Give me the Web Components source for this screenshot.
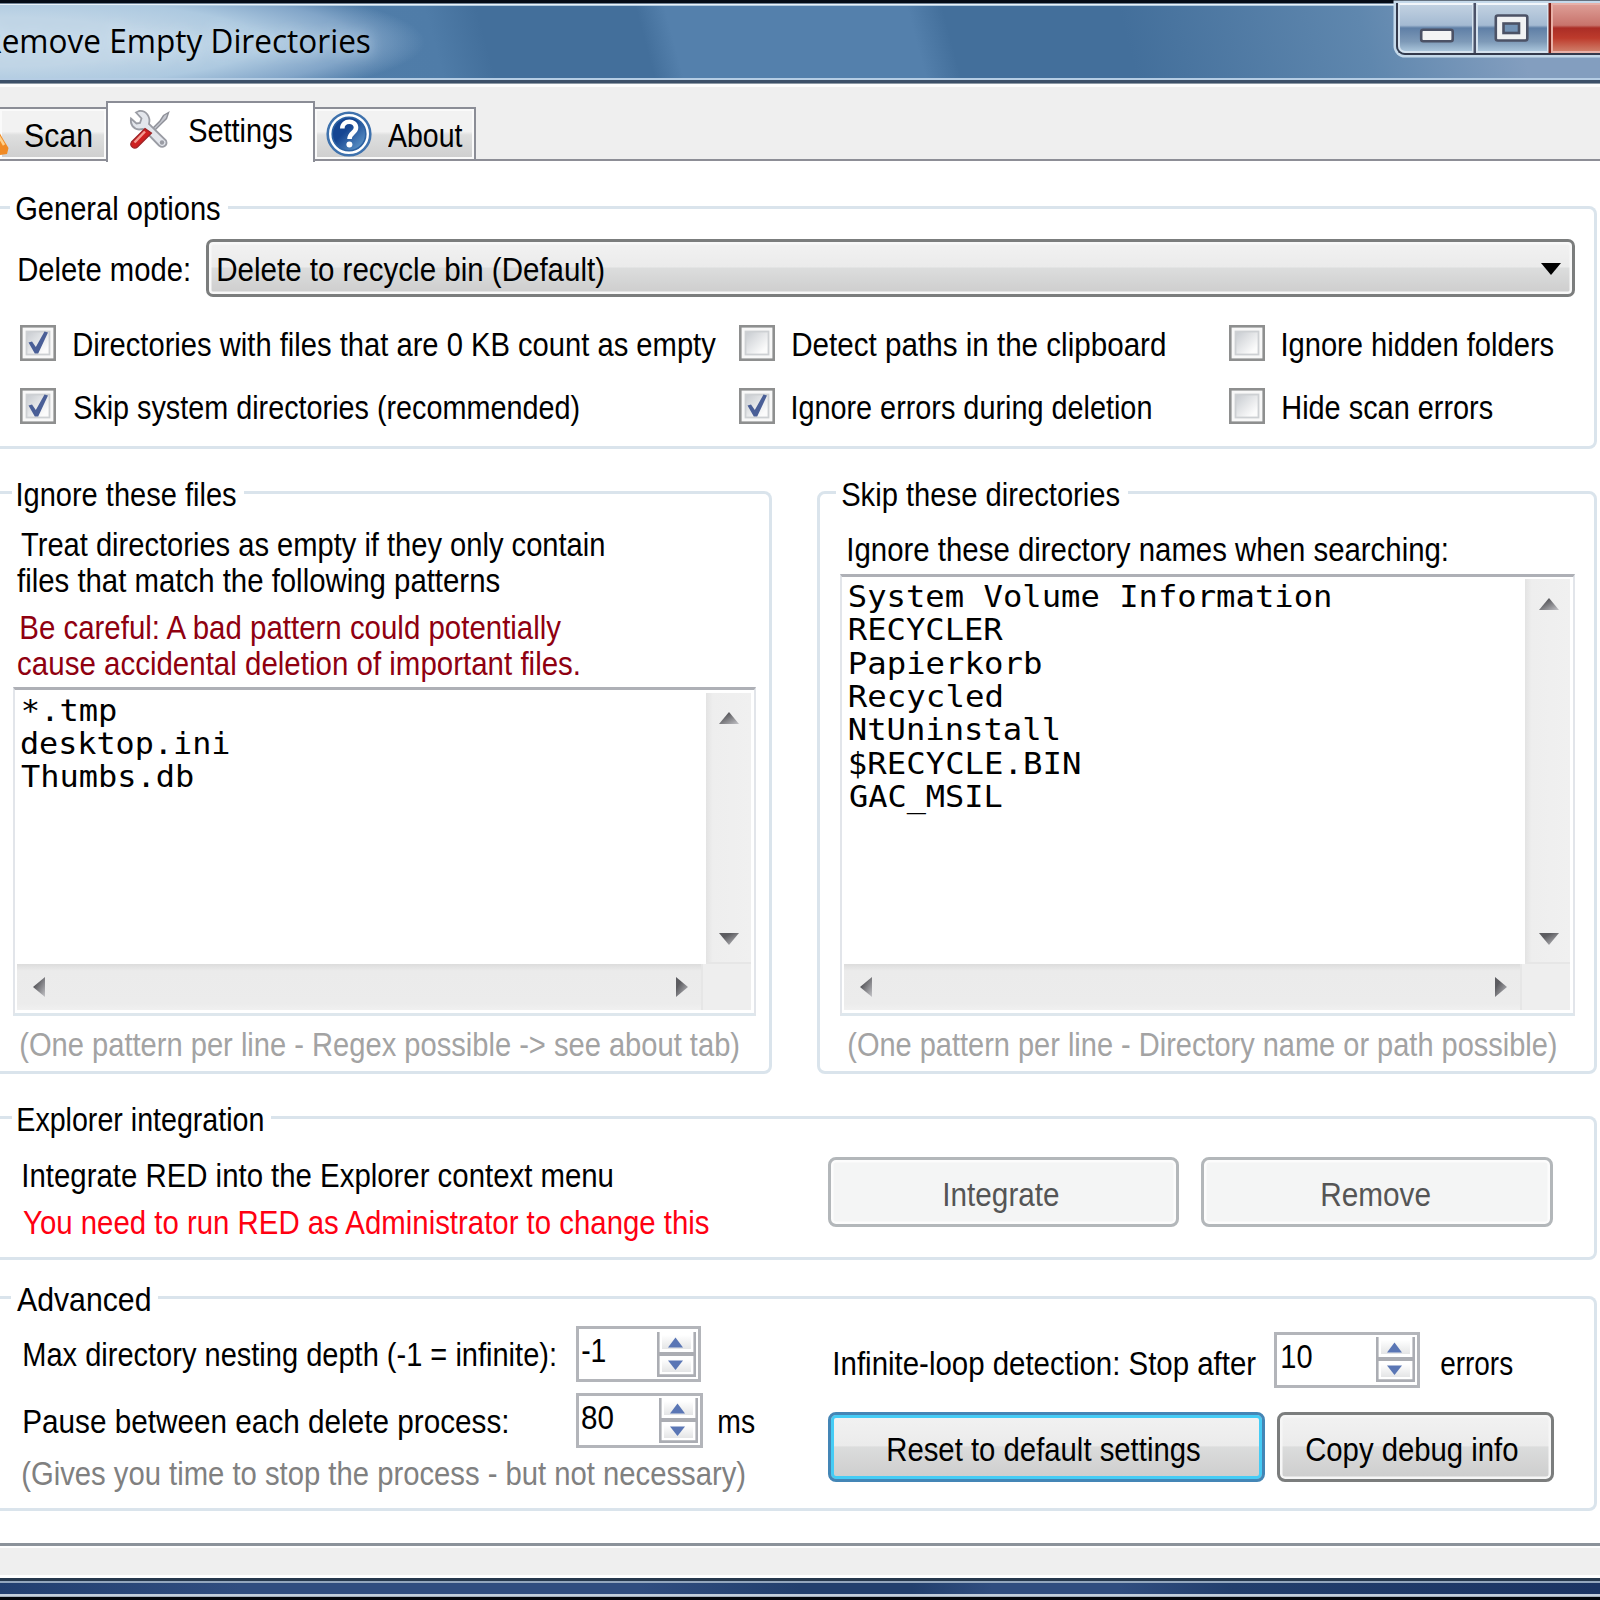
<!DOCTYPE html>
<html lang="en">
<head>
<meta charset="utf-8">
<title>Remove Empty Directories</title>
<style>
  html, body { margin: 0; padding: 0; width: 1600px; height: 1600px; overflow: hidden; background: #fff; }
  body { font-family: "Liberation Sans", Arial, sans-serif; font-size: 33.5px; color: #000; }
</style>
</head>
<body>
<red-window></red-window>
<script>
const define = (name, html, setup) => {
  const tpl = document.createElement('template');
  tpl.innerHTML = html;
  customElements.define(name, class extends HTMLElement {
    connectedCallback() {
      if (this.shadowRoot) return;
      this.attachShadow({ mode: 'open' }).appendChild(tpl.content.cloneNode(true));
      if (setup) setup.call(this, this.shadowRoot);
    }
  });
};

/* Text run whose visible glyphs span exactly the width given in "w". */
const ctx = document.createElement('canvas').getContext('2d');
define('fit-text', `
  <style>
    :host { display: block; height: 36px; line-height: 36px; flex: none; }
    span { display: inline-block; white-space: pre; transform-origin: 0 0; }
  </style><span><slot></slot></span>`, function (root) {
  const w = parseFloat(this.getAttribute('w'));
  const cs = getComputedStyle(this);
  ctx.font = `${cs.fontSize} ${cs.fontFamily}`;
  const m = ctx.measureText(this.textContent);
  const s = w / (m.actualBoundingBoxLeft + m.actualBoundingBoxRight);
  this.style.width = w + 'px';
  root.querySelector('span').style.transform =
    `translate(${m.actualBoundingBoxLeft * s}px, var(--dy, 0px)) scaleX(${s})`;
});

define('title-bar', `
  <style>
    :host { display: flex; flex: none; height: 84px; box-sizing: border-box; justify-content: space-between; align-items: flex-start;
      padding-top: 3px; overflow: hidden;
      background:
        linear-gradient(#040b16 0 3px, #6f8296 3px 3.6px, #e9f2f9 3.6px 5.2px, #b3cde2 5.2px 6.4px, transparent 6.4px 78px, #b5cde4 78px 80.3px, #3c5068 80.5px 83px, #8d99a5 83px 84px),
        radial-gradient(ellipse 425px 70px at 0px 42px, #c0d5e6 0 35%, #adc9e0 62%, #8eafd0cc 84%, #6a93bd00 100%),
        linear-gradient(75deg, #5480ab 0, #4f7ca8 430px, #436f9b 480px, #436f9b 634px, #5480ac 662px, #5480ac 896px, #436f9b 930px, #436f9b 1100px, #5f87ae 1330px, #839ebf 1480px); }
    fit-text { font-family: "Open Sans", "Noto Sans", sans-serif; font-size: 33.5px; margin: 19px 0 0 -15px; text-shadow: 0 0 14px #dcebf6; }
    .controls { display: flex; flex: none; width: 202px; height: 50px; border: 2px solid #33394b; border-top: 0; border-right: 0;
      border-radius: 0 0 0 9px; box-shadow: 0 0 0 2.5px #c5d9ea; overflow: visible; }
    .b { box-sizing: border-box; flex: none; display: flex; justify-content: center; border: 2px solid #d5e2ee; border-top-color: #f2f6fa; height: 50px;
      background: linear-gradient(#c1d1e1 0, #a4bad2 44%, #5f7fa6 50%, #7e9ab8 80%, #a9c4da); }
    .min { width: 75.5px; border-radius: 0 0 0 7px; }
    .max { width: 72.5px; }
    .max, .close { box-shadow: -2.5px 0 #4b5268; margin-left: 2.5px; }
    .close { width: 60px; box-shadow: -2.5px 0 #7c2018; border-color: #e8b1a8; background: linear-gradient(#dd9d95, #c8736c 44%, #ab2d26 50%, #bd3b2c 72%, #cf7c68); }
    svg { display: block; }
  </style>
  <fit-text w="385">Remove Empty Directories</fit-text>
  <div class="controls">
    <div class="b min"><svg width="36" height="48"><rect x="3.2" y="24.8" width="31.5" height="11.5" rx="2" fill="#f4f4f4" stroke="#4c5266" stroke-width="2.6"/></svg></div>
    <div class="b max"><svg width="36" height="48"><rect x="1.8" y="10.5" width="31.5" height="25" rx="2" fill="#f1f2f4" stroke="#4c5266" stroke-width="2.6"/><rect x="9.5" y="18.5" width="15.5" height="9.5" fill="#7392b5" stroke="#4c5266" stroke-width="2.6"/></svg></div>
    <div class="b close"></div>
  </div>`);

define('tab-item', `
  <style>
    :host { display: flex; box-sizing: border-box; flex: none; align-items: flex-start; height: 52px; border: 2.5px solid #8b8d96; border-bottom: 0;
      box-shadow: inset 0 0 0 2px #fafafa; background: linear-gradient(#f2f2f2 0 45%, #dedfdf 52%, #cecece); }
    :host([selected]) { height: 60.5px; margin-bottom: -2.5px; background: #fff; box-shadow: none; position: relative; }
  </style><slot></slot>`);

define('group-box', `
  <style>
    :host { display: flex; flex-direction: column; flex: none; box-sizing: border-box; border: 3px solid #dae4ec; border-radius: 8px; }
    :host([open-left]) { border-left: 0; border-radius: 0 8px 8px 0; }
    .legend { align-self: flex-start; background: #fff; height: 36px; margin: -19px 0 0 var(--lx, 11px); padding: 0 8px 0 6px; }
  </style>
  <div class="legend"><slot name="legend"></slot></div><slot></slot>`);

define('check-box', `
  <style>
    :host { display: flex; align-items: center; height: 36px; }
    svg { flex: none; margin-right: 18px; }
  </style>
  <svg width="36" height="36" viewBox="0 0 36 36">
    <defs><linearGradient id="g" x1="0" y1="0" x2="1" y2="1"><stop offset="0" stop-color="#c6cacf"/><stop offset=".8" stop-color="#fbfbfb"/></linearGradient></defs>
    <rect x="1.3" y="1.3" width="33.4" height="33.4" fill="#f8f8f8" stroke="#8e8f8f" stroke-width="2.6"/>
    <rect x="6.5" y="6.5" width="23" height="23" fill="url(#g)" stroke="#cdd0d3" stroke-width="1.8"/>
    <path class="tick" d="M8.5 17.5 L12 16.5 L15.8 22 L24.5 6.5 L28 7.5 L18.2 28.5 L14.8 28.5 Z" fill="#4a5f97"/>
  </svg><slot></slot>`, function (root) {
  if (!this.hasAttribute('checked')) root.querySelector('.tick').remove();
});

define('combo-box', `
  <style>
    :host { display: flex; align-items: center; justify-content: space-between; box-sizing: border-box; flex: none; height: 58px; border: 3px solid #7b7d7d; border-radius: 7px;
      padding: 0 11px 0 9.5px; box-shadow: inset 0 0 0 2.5px #f8f8f8; background: linear-gradient(#f2f2f2, #ebebeb 48%, #dcdddd 50%, #cdcdcd); }
    svg { margin-top: 2px; }
  </style><slot></slot><svg width="20" height="12"><path d="M0 0H20L10 12Z"/></svg>`);

define('push-button', `
  <style>
    :host { display: flex; align-items: center; justify-content: center; box-sizing: border-box; flex: none; height: 69.3px; border: 3px solid #7b7d7d; border-radius: 8px; padding-top: 2px;
      box-shadow: inset 0 0 0 2.5px #f6f6f6; background: linear-gradient(#f2f2f2, #ebebeb 48%, #dbdcdc 50%, #cdcdcd); }
    :host([disabled]) { border-color: #b3b7ba; background: #f4f5f5; color: #555; box-shadow: inset 0 0 0 2.5px #fcfcfc; }
    :host([default]) { border-color: #4486b6; box-shadow: inset 0 0 0 3px #45ccf5; }
  </style><slot></slot>`);

define('spin-box', `
  <style>
    :host { display: flex; justify-content: space-between; box-sizing: border-box; flex: none; height: 55.6px; border: 3px solid #b3b5ba; background: #fff; padding: 2.5px 2px 0 3px; }
    svg { display: block; flex: none; }
    ::slotted(fit-text) { margin-top: .2px; }
  </style><slot></slot>
  <svg width="39" height="45" viewBox="0 0 39 45">
    <defs><linearGradient id="f" x1="0" y1="0" x2="0" y2="1"><stop offset="0" stop-color="#fff"/><stop offset="1" stop-color="#e4e5e6"/></linearGradient></defs>
    <path d="M1.3 0V43.6H37.7V0" fill="none" stroke="#abadb3" stroke-width="2.6"/><path d="M1.3 22H37.7" stroke="#abadb3" stroke-width="4"/>
    <rect x="5" y="3" width="29" height="14" fill="url(#f)"/><rect x="5" y="27" width="29" height="13" fill="url(#f)"/>
    <path d="M11 15.5H26L18.5 5.5Z" fill="#5a76b5"/><path d="M11 28.5H26L18.5 38Z" fill="#5a76b5"/>
  </svg>`);

define('list-box', `
  <style>
    :host { display: grid; grid-template-columns: minmax(0, 1fr) 45px; grid-template-rows: minmax(0, 1fr) 46px; box-sizing: border-box; flex: none;
      border: 2px solid #e2e5ea; border-top: 3px solid #aeb0b6; border-bottom: 3px solid #dee7ed; padding: 2.5px 3px 3px 2.5px;
      font-family: "DejaVu Sans Mono", "Liberation Mono", monospace; font-size: 29.5px; background: #fff; }
    .text { padding: 0 0 0 var(--tx, 3.5px); }
    ::slotted(fit-text) { height: 33.3px !important; line-height: 33.3px !important; }
    .v { background: linear-gradient(90deg, #e3e3e3, #eee 15%, #f0f0f0); display: flex; flex-direction: column; justify-content: space-between; align-items: center; padding: 19px 0 17px 2px; border-bottom: 2px solid #e6e6e6; }
    .h { background: linear-gradient(#dcdcdc, #ebebeb 15%, #ececec 85%, #f0f0f0); display: flex; justify-content: space-between; align-items: center; padding: 0 13px 1px 16px; margin-right: 3px; border-right: 2px solid #e6e6e6; }
    .c { background: #eee; margin-left: -3px; }
    svg { display: block; }
  </style>
  <div class="text"><slot></slot></div>
  <div class="v">
    <svg width="20" height="12"><defs><linearGradient id="a" x1="0" y1="0" x2="1" y2="1"><stop offset=".3" stop-color="#5c5c60"/><stop offset="1" stop-color="#c4c4c8"/></linearGradient></defs><path d="M0 12H20L10 0Z" fill="url(#a)"/></svg>
    <svg width="20" height="12"><path d="M0 0H20L10 12Z" fill="url(#a)"/></svg></div>
  <div class="h"><svg width="12" height="20"><path d="M12 0V20L0 10Z" fill="url(#a)"/></svg><svg width="12" height="20"><path d="M0 0V20L12 10Z" fill="url(#a)"/></svg></div>
  <div class="c"></div>`);

define('red-window', `
  <style>
    :host { display: flex; flex-direction: column; width: 1600px; height: 1600px; overflow: hidden; }
    .strip { display: flex; flex: none; align-items: flex-end; box-sizing: border-box; height: 77px; border-bottom: 2.6px solid #8d8e96; background: linear-gradient(#fcfcfc 0 2.5px, #efefef 3px); }
    .panel { flex: none; box-sizing: border-box; height: 1382px; padding-top: 45px; display: flex; flex-direction: column; background: #fff; --dy: 2px; }
    .row { display: flex; align-items: center; flex: none; }
    .col { display: flex; flex-direction: column; flex: none; align-items: flex-start; }
    .checks { display: grid; grid-template-columns: 719.5px 490px auto; row-gap: 27.5px; padding-left: 19.5px; margin-top: 28px; }
    .bottom { flex: none; height: 57px; background: linear-gradient(#8b929a 0 2.5px, #fdfdfd 2.6px 5px, #efefef 5px 32px, #fff 32px 34.5px, #26384d 34.6px 37.6px, #93a6bd 38px 39.5px, transparent 39.6px 51px, #c3cfdd 51.2px 53.4px, #02060c 54px),
      linear-gradient(90deg, #223f70, #304d7f 15%, #304d7f 40%, #223f6d 50%, #223f6d 57%, #304d7f 62%, #304d7f 70%, #223e6c 77%, #1b3463); }
    svg { flex: none; display: block; }
  </style>
  <title-bar></title-bar>
  <div class="strip">
    <tab-item style="width:108px;border-left:0;margin-right:-2.3px">
      <svg width="10" height="30" style="margin-top:19px"><path d="M-4 -2L3 11 8.5 20 7 26 0 27 -8 14Z" fill="#f08a24"/><path d="M-3 5L4 17" stroke="#ffd08a" stroke-width="2.5"/></svg>
      <fit-text w="66.5" style="margin:9px 0 0 15.2px">Scan</fit-text>
    </tab-item>
    <tab-item selected style="width:209.7px">
      <svg width="42" height="42" viewBox="0 0 42 42" style="margin:5.5px 0 0 21px">
        <path d="M39.5 3.5L34.5 6.5 31 12 21 22 23 24 33 14 37.5 9.5Z" fill="#c4c6ce" stroke="#8e9098" stroke-width="1.4"/>
        <path d="M7 3.5L12.5 9.5 11 14 7.5 14.5 2 9.5C1 15 4 20 10 20.5L14 20 30 36.5C34 40 39 36 37 31.5L20 15C22 8 17 1 10 2Z" fill="#e3e6ec" stroke="#9a9ca4" stroke-width="1.8"/>
        <circle cx="33" cy="33.5" r="2.2" fill="#9a9ca4"/>
        <path d="M16 19.5L22.5 24 8.5 38C5 41 0 37 2.5 33Z" fill="#cf2020" stroke="#9c2226" stroke-width="1.2"/>
        <path d="M16 22.5L5.5 33.5" stroke="#f49a90" stroke-width="2.5"/>
      </svg>
      <fit-text w="103" style="margin:9.8px 0 0 18.5px">Settings</fit-text>
    </tab-item>
    <tab-item style="width:162.5px;margin-left:-2px">
      <svg width="46" height="46" viewBox="0 0 46 46" style="margin:1.5px 0 0 10.8px">
        <defs><linearGradient id="q" x1="0" y1="0" x2="1" y2="1"><stop offset=".4" stop-color="#154592"/><stop offset="1" stop-color="#6ea6d2"/></linearGradient></defs>
        <circle cx="23" cy="23" r="21.3" fill="#fff" stroke="#3f72ad" stroke-width="2.6"/>
        <circle cx="23" cy="23" r="16.8" fill="url(#q)" stroke="#2c62a3" stroke-width="1.6"/>
        <path d="M16.3 17.5C16.3 8.5 30.2 8.8 30 16.8C29.9 22 23.7 21.8 23.5 28" fill="none" stroke="#fff" stroke-width="4.6"/><circle cx="23.4" cy="33.5" r="3" fill="#fff"/>
      </svg>
      <fit-text w="75" style="margin:9px 0 0 15.5px">About</fit-text>
    </tab-item>
  </div>

  <div class="panel">
    <group-box open-left style="width:1597px;height:243px;--lx:10px">
      <fit-text slot="legend" w="204" style="--dy:1px">General options</fit-text>
      <div class="row" style="margin-top:12.5px;padding-left:18.5px">
        <fit-text w="170">Delete mode:</fit-text>
        <combo-box style="width:1369.5px;margin-left:17px"><fit-text w="386">Delete to recycle bin (Default)</fit-text></combo-box>
      </div>
      <div class="checks">
        <check-box checked><fit-text w="642">Directories with files that are 0 KB count as empty</fit-text></check-box>
        <check-box><fit-text w="372">Detect paths in the clipboard</fit-text></check-box>
        <check-box><fit-text w="270.5">Ignore hidden folders</fit-text></check-box>
        <check-box checked><fit-text w="505">Skip system directories (recommended)</fit-text></check-box>
        <check-box checked><fit-text w="358">Ignore errors during deletion</fit-text></check-box>
        <check-box><fit-text w="209.5">Hide scan errors</fit-text></check-box>
      </div>
    </group-box>

    <div class="row" style="margin-top:41.7px;align-items:flex-start">
      <group-box open-left style="width:772px;height:583.6px;--lx:12px">
        <fit-text slot="legend" w="218">Ignore these files</fit-text>
        <fit-text w="583" style="margin:14px 0 0 20.5px">Treat directories as empty if they only contain</fit-text>
        <fit-text w="482.5" style="margin-left:16.5px">files that match the following patterns</fit-text>
        <fit-text w="543.5" style="margin:11px 0 0 20.5px;color:#8f0010">Be careful: A bad pattern could potentially</fit-text>
        <fit-text w="561" style="margin-left:18px;color:#8f0010">cause accidental deletion of important files.</fit-text>
        <list-box style="width:743px;height:328.7px;margin:7.7px 0 0 12.5px">
          <fit-text w="92.5" style="margin-left:2.5px">*.tmp</fit-text>
          <fit-text w="207.5">desktop.ini</fit-text>
          <fit-text w="172.5">Thumbs.db</fit-text>
        </list-box>
        <fit-text w="718" style="margin:8.6px 0 0 20.5px;color:#a3a3a3">(One pattern per line - Regex possible -&gt; see about tab)</fit-text>
      </group-box>
      <group-box style="width:780px;height:583.6px;margin-left:45px;--lx:16px">
        <fit-text slot="legend" w="277.5">Skip these directories</fit-text>
        <fit-text w="598" style="margin:19px 0 0 29px">Ignore these directory names when searching:</fit-text>
        <list-box style="width:735.7px;height:442.5px;margin:8px 0 0 19.8px;--tx:5.7px">
          <fit-text w="480.5">System Volume Information</fit-text>
          <fit-text w="153">RECYCLER</fit-text>
          <fit-text w="191.5">Papierkorb</fit-text>
          <fit-text w="152">Recycled</fit-text>
          <fit-text w="208">NtUninstall</fit-text>
          <fit-text w="229.5">$RECYCLE.BIN</fit-text>
          <fit-text w="152">GAC_MSIL</fit-text>
        </list-box>
        <fit-text w="707.5" style="margin:8.6px 0 0 28.5px;color:#a3a3a3">(One pattern per line - Directory name or path possible)</fit-text>
      </group-box>
    </div>

    <group-box open-left style="width:1597px;height:144px;margin-top:41.7px;--lx:12px">
      <fit-text slot="legend" w="245">Explorer integration</fit-text>
      <div class="row" style="align-items:flex-start">
        <div class="col" style="width:828px">
          <fit-text w="588.5" style="margin:19.6px 0 0 24px">Integrate RED into the Explorer context menu</fit-text>
          <fit-text w="687.5" style="margin:11px 0 0 22.5px;color:#ff0012">You need to run RED as Administrator to change this</fit-text>
        </div>
        <push-button disabled style="width:351px;margin-top:21.3px"><fit-text w="114" style="margin-right:3px">Integrate</fit-text></push-button>
        <push-button disabled style="width:352px;margin:21.3px 0 0 22px"><fit-text w="108.5" style="margin-right:2px">Remove</fit-text></push-button>
      </div>
    </group-box>

    <group-box open-left style="width:1597px;height:215.5px;margin-top:36px;--lx:11px">
      <fit-text slot="legend" w="133">Advanced</fit-text>
      <div class="row" style="align-items:flex-start">
        <div class="col" style="width:828px">
          <div class="row" style="margin-top:10.3px;padding-left:23.5px;--dy:1px">
            <fit-text w="531">Max directory nesting depth (-1 = infinite):</fit-text>
            <spin-box style="width:124.5px;margin-left:21.5px"><fit-text w="23">-1</fit-text></spin-box>
          </div>
          <div class="row" style="margin-top:11px;padding-left:23.5px;--dy:1px">
            <fit-text w="483.5">Pause between each delete process:</fit-text>
            <spin-box style="width:127px;margin-left:69px"><fit-text w="31.5">80</fit-text></spin-box>
            <fit-text w="35.5" style="margin-left:16px">ms</fit-text>
          </div>
          <fit-text w="722" style="margin:6px 0 0 22.5px;color:#808080">(Gives you time to stop the process - but not necessary)</fit-text>
        </div>
        <div class="col">
          <div class="row" style="margin-top:16px;padding-left:7px">
            <fit-text w="421" style="margin-top:4px">Infinite-loop detection: Stop after</fit-text>
            <spin-box style="width:146.5px;margin-left:17.5px;--dy:1px"><fit-text w="30" style="margin-left:2.5px">10</fit-text></spin-box>
            <fit-text w="71.5" style="margin:4px 0 0 21px">errors</fit-text>
          </div>
          <div class="row" style="margin-top:24.7px">
            <push-button default style="width:436.5px"><fit-text w="312" style="margin-right:5px">Reset to default settings</fit-text></push-button>
            <push-button style="width:277px;margin-left:12px"><fit-text w="212" style="margin-right:7px">Copy debug info</fit-text></push-button>
          </div>
        </div>
      </div>
    </group-box>
  </div>
  <div class="bottom"></div>`);
</script>
</body>
</html>
